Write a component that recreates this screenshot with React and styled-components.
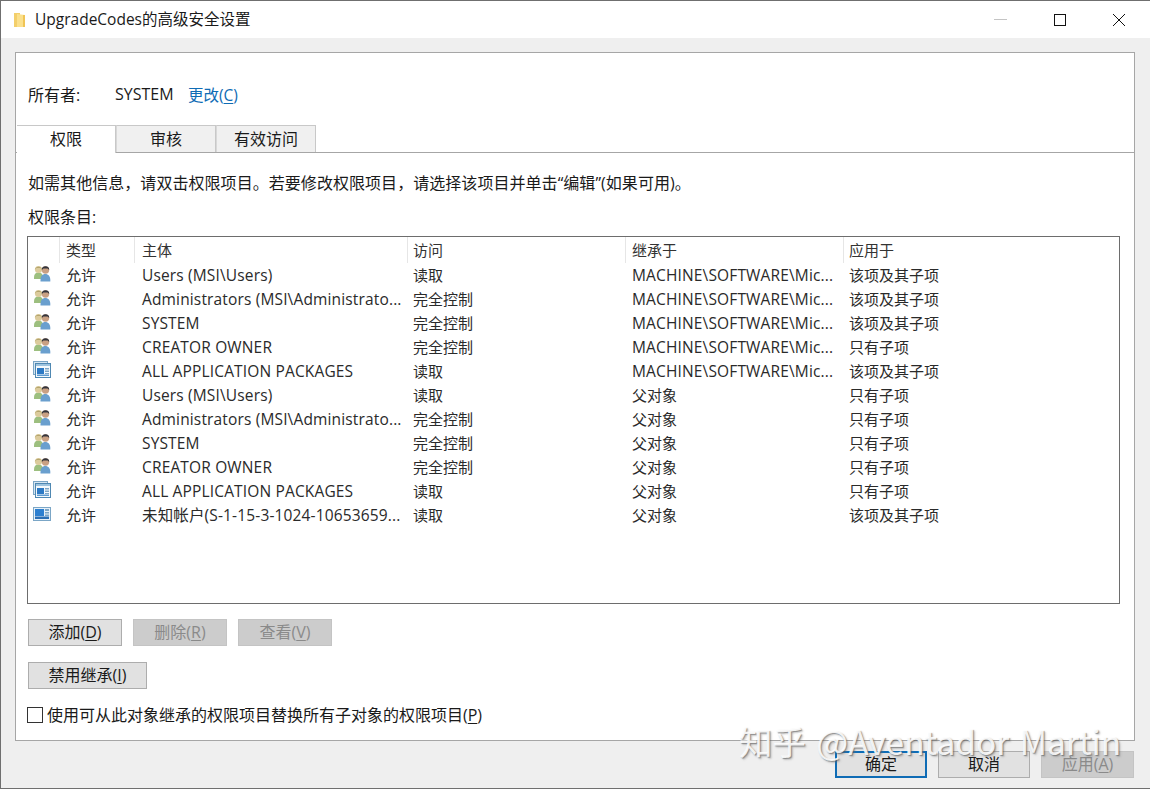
import React from 'react';
import styled, { createGlobalStyle } from 'styled-components';

const GlobalStyle = createGlobalStyle`
  html, body {
    margin: 0;
    padding: 0;
    background: #f0f0f0;
  }
  * {
    box-sizing: border-box;
  }
`;

const Window = styled.div`
  position: relative;
  width: 1150px;
  height: 789px;
  display: flex;
  flex-direction: column;
  overflow: hidden;
  background: #efefef;
  border: 1px solid #6f6f6f;
  border-right: none;
  font-family: "Open Sans", "Noto Sans CJK SC", sans-serif;
  font-size: 16px;
  color: #1a1a1a;
`;

const TitleBar = styled.div`
  height: 37px;
  flex: none;
  display: flex;
  align-items: center;
  padding-left: 12px;
  background: #fff;
`;

const TitleText = styled.span`
  margin-left: 8px;
  padding-bottom: 3px;
  font-size: 15.5px;
`;

const WindowControls = styled.div`
  margin-left: auto;
  display: flex;
  align-items: center;
  gap: 47px;
  padding-right: 25px;
`;

const Body = styled.div`
  flex: 1;
  display: flex;
  flex-direction: column;
  padding: 14px 15px 10px 14px;
`;

const Panel = styled.div`
  height: 689px;
  flex: none;
  display: flex;
  flex-direction: column;
  background: #fff;
  border: 1px solid #a6a6a6;
`;

const OwnerRow = styled.div`
  height: 72px;
  flex: none;
  display: flex;
  align-items: center;
  padding: 10px 0 0 12px;
`;

const OwnerLabel = styled.span`
  width: 87px;
`;

const OwnerValue = styled.span`
  width: 74px;
`;

const Link = styled.a`
  margin-left: -1px;
  font-size: 15.5px;
  color: #0f6cb5;
`;

const TabBar = styled.div`
  height: 28px;
  flex: none;
  display: flex;
  padding-left: 1px;
  border-bottom: 1px solid #a6a6a6;
`;

const Tab = styled.div`
  width: ${(p) => (p.$active ? '99px' : '100px')};
  height: ${(p) => (p.$active ? '28px' : '27px')};
  display: flex;
  align-items: center;
  justify-content: center;
  padding-bottom: 3px;
  background: ${(p) => (p.$active ? '#fff' : '#f0f0f0')};
  border: 1px solid #c8c8c8;
  border-left: ${(p) => (p.$active ? 'none' : '1px solid #d8d8d8')};
  border-bottom: none;
`;

const PanelBody = styled.div`
  flex: 1;
  display: flex;
  flex-direction: column;
  padding: 0 14px 0 11px;
`;

const Description = styled.div`
  height: 20px;
  margin-top: 20px;
  line-height: 20px;
  padding-left: 1px;
  letter-spacing: 0.05px;
  white-space: nowrap;
`;

const SectionLabel = styled.div`
  height: 20px;
  margin-top: 14px;
  line-height: 20px;
  padding-left: 1px;
`;

const EntryList = styled.div`
  height: 368px;
  flex: none;
  margin-top: 9px;
  background: #fff;
  border: 1px solid #6d6d6d;
  font-size: 15px;
`;

const columns = '31px 75px 273px 218px 218px 1fr';

const HeaderRow = styled.div`
  height: 26px;
  display: grid;
  grid-template-columns: ${columns};
`;

const HeaderCell = styled.div`
  display: flex;
  align-items: center;
  padding-left: ${(p) => p.$pad}px;
  padding-top: 1px;
  padding-bottom: 2px;
  box-shadow: ${(p) => (p.$pad ? 'inset 1px 0 0 #e6e6e6' : 'none')};
  color: #333;
  white-space: nowrap;
`;

const EntryRow = styled.div`
  height: 24px;
  display: grid;
  grid-template-columns: ${columns};
  align-items: center;
`;

const Cell = styled.div`
  padding-left: ${(p) => p.$pad}px;
  padding-bottom: ${(p) => (p.$latin ? '0' : '2px')};
  font-size: ${(p) => (p.$wide ? '15.5px' : '15px')};
  letter-spacing: ${(p) => (p.$wide ? '0.15px' : '0')};
  white-space: nowrap;
  overflow: hidden;
  color: #2a2a2a;
`;

const IconCell = styled.div`
  display: flex;
  align-items: center;
  padding: 0 0 3px 5px;
`;

const ButtonRow = styled.div`
  display: flex;
  gap: 11px;
  margin-top: ${(p) => p.$top}px;
  padding-left: 1px;
`;

const Button = styled.button`
  width: ${(p) => p.$width}px;
  height: 27px;
  padding: 0 0 2px;
  font-family: inherit;
  font-size: 16px;
  line-height: 1;
  color: ${(p) => (p.disabled ? '#8a8a8a' : '#1a1a1a')};
  background: ${(p) => (p.disabled ? '#cccccc' : '#e1e1e1')};
  border: ${(p) => (p.$primary ? '2px solid #0f6cb5' : p.disabled ? '1px solid #c4c4c4' : '1px solid #adadad')};
`;

const CheckRow = styled.label`
  display: flex;
  align-items: center;
  gap: 4px;
  height: 20px;
  margin-top: 16px;
  white-space: nowrap;
`;

const CheckText = styled.span`
  padding-bottom: 2px;
`;

const CheckBox = styled.span`
  width: 16px;
  height: 16px;
  flex: none;
  background: #fff;
  border: 1px solid #333;
`;

const Key = styled.span`
  text-decoration: underline;
  text-underline-offset: 2px;
  text-decoration-thickness: 1px;
`;

const Footer = styled.div`
  display: flex;
  justify-content: flex-end;
  gap: 11px;
  margin-top: 10px;
  padding-right: 1px;
`;

const Watermark = styled.div`
  position: absolute;
  left: 738px;
  top: 719px;
  font-family: "Noto Sans CJK SC", "Open Sans", sans-serif;
  font-size: 33.5px;
  line-height: 42px;
  word-spacing: 3px;
  white-space: nowrap;
  color: rgba(255, 255, 255, 0.88);
  text-shadow: 1px 1px 1px rgba(80, 80, 80, 0.55), 2px 2px 2px rgba(120, 120, 120, 0.35);
`;

const FolderIcon = () => (
  <svg width="14" height="16" viewBox="0 0 14 16">
    <path d="M1 1h6v14H1z" fill="#f3cf6b" />
    <path d="M4 2l8 1v12H4z" fill="#fbe08c" />
    <path d="M10 3h2v12h-2z" fill="#f0c455" />
  </svg>
);

const MinimizeIcon = () => (
  <svg width="13" height="12" viewBox="0 0 13 12">
    <path d="M0 5.5h13" stroke="#c4c4c4" strokeWidth="1" />
  </svg>
);

const MaximizeIcon = () => (
  <svg width="12" height="12" viewBox="0 0 12 12">
    <rect x="0.5" y="0.5" width="11" height="11" fill="none" stroke="#111" strokeWidth="1" />
  </svg>
);

const CloseIcon = () => (
  <svg width="12" height="12" viewBox="0 0 12 12">
    <path d="M0 0l12 12M12 0L0 12" stroke="#111" strokeWidth="1" />
  </svg>
);

const UsersIcon = () => (
  <svg width="19" height="17" viewBox="0 0 19 17">
    <path d="M1 12.5c0-3.2 1.6-5 4.5-5s4.5 1.8 4.5 5v1.5H1z" fill="#9dbf7f" />
    <circle cx="5.5" cy="4.5" r="3.6" fill="#dccb9c" />
    <path d="M2 4.5a3.6 3.6 0 0 1 7 0l-1.6-1.4H3.6z" fill="#b4a56f" />
    <path d="M7.5 15c0-3.8 1.8-6 4.8-6s5 2.2 5 6v1.5H7.5z" fill="#6a9fce" />
    <circle cx="12.5" cy="5" r="3.7" fill="#c9a083" />
    <path d="M8.8 5a3.7 3.7 0 0 1 7.4 0l-1.6-1.4h-4.2z" fill="#33343c" />
  </svg>
);

const PackagesIcon = () => (
  <svg width="18" height="17" viewBox="0 0 18 17">
    <rect x="0.5" y="0.5" width="14" height="13" fill="#d6e6f2" stroke="#7ba6c6" />
    <rect x="2.5" y="2.5" width="15" height="14" fill="#f4f9fc" stroke="#4f88b2" />
    <rect x="3" y="3" width="14" height="2" fill="#9cc3df" />
    <rect x="4" y="7" width="7" height="6" fill="#2c79c4" />
    <rect x="4" y="13.5" width="12" height="1.5" fill="#5c9ad0" />
    <path d="M12 7h4v1.5h-4zM12 9.5h4V11h-4zM12 12h4v1h-4z" fill="#7da6c6" />
  </svg>
);

const AppIcon = () => (
  <svg width="18" height="14" viewBox="0 0 18 14">
    <rect x="0.5" y="0.5" width="17" height="13" fill="#e6f0f8" stroke="#7ba6c6" />
    <rect x="2" y="2" width="9" height="7" fill="#2c7fd0" />
    <rect x="2" y="9.5" width="14" height="2.5" fill="#2a6fb5" />
    <path d="M12 2h4v2h-4zM12 5h4v1.5h-4zM12 7.5h4V9h-4z" fill="#7da6c6" />
  </svg>
);

const rowIcons = {
  users: UsersIcon,
  packages: PackagesIcon,
  app: AppIcon,
};

const MACHINE = 'MACHINE\\SOFTWARE\\Mic...';
const THIS_AND_SUB = '该项及其子项';
const SUB_ONLY = '只有子项';
const ADMINS = 'Administrators (MSI\\Administrato...';

const entries = [
  ['users', 'Users (MSI\\Users)', '读取', MACHINE, THIS_AND_SUB],
  ['users', ADMINS, '完全控制', MACHINE, THIS_AND_SUB],
  ['users', 'SYSTEM', '完全控制', MACHINE, THIS_AND_SUB],
  ['users', 'CREATOR OWNER', '完全控制', MACHINE, SUB_ONLY],
  ['packages', 'ALL APPLICATION PACKAGES', '读取', MACHINE, THIS_AND_SUB],
  ['users', 'Users (MSI\\Users)', '读取', '父对象', SUB_ONLY],
  ['users', ADMINS, '完全控制', '父对象', SUB_ONLY],
  ['users', 'SYSTEM', '完全控制', '父对象', SUB_ONLY],
  ['users', 'CREATOR OWNER', '完全控制', '父对象', SUB_ONLY],
  ['packages', 'ALL APPLICATION PACKAGES', '读取', '父对象', SUB_ONLY],
  ['app', '未知帐户(S-1-15-3-1024-10653659...', '读取', '父对象', THIS_AND_SUB],
];

const headers = [
  ['', 0],
  ['类型', 7],
  ['主体', 8],
  ['访问', 6],
  ['继承于', 7],
  ['应用于', 6],
];

const isLatin = (text) => /^[\x00-\x7f]+$/.test(text);

const App = () => (
  <>
    <GlobalStyle />
    <Window lang="zh-CN">
      <TitleBar>
        <FolderIcon />
        <TitleText>UpgradeCodes的高级安全设置</TitleText>
        <WindowControls>
          <MinimizeIcon />
          <MaximizeIcon />
          <CloseIcon />
        </WindowControls>
      </TitleBar>
      <Body>
        <Panel>
          <OwnerRow>
            <OwnerLabel>所有者:</OwnerLabel>
            <OwnerValue>SYSTEM</OwnerValue>
            <Link>更改(<Key>C</Key>)</Link>
          </OwnerRow>
          <TabBar>
            <Tab $active>权限</Tab>
            <Tab>审核</Tab>
            <Tab>有效访问</Tab>
          </TabBar>
          <PanelBody>
            <Description>如需其他信息，请双击权限项目。若要修改权限项目，请选择该项目并单击“编辑”(如果可用)。</Description>
            <SectionLabel>权限条目:</SectionLabel>
            <EntryList>
              <HeaderRow>
                {headers.map(([label, pad], i) => (
                  <HeaderCell key={i} $pad={pad}>{label}</HeaderCell>
                ))}
              </HeaderRow>
              {entries.map(([icon, principal, access, inherited, applies], i) => {
                const RowIcon = rowIcons[icon];
                return (
                  <EntryRow key={i}>
                    <IconCell><RowIcon /></IconCell>
                    <Cell $pad={7}>允许</Cell>
                    <Cell $pad={8} $wide $latin={isLatin(principal)}>{principal}</Cell>
                    <Cell $pad={6}>{access}</Cell>
                    <Cell $pad={7} $wide={isLatin(inherited)} $latin={isLatin(inherited)}>{inherited}</Cell>
                    <Cell $pad={6}>{applies}</Cell>
                  </EntryRow>
                );
              })}
            </EntryList>
            <ButtonRow $top={15}>
              <Button $width={94}>添加(<Key>D</Key>)</Button>
              <Button $width={94} disabled>删除(<Key>R</Key>)</Button>
              <Button $width={94} disabled>查看(<Key>V</Key>)</Button>
            </ButtonRow>
            <ButtonRow $top={16}>
              <Button $width={119}>禁用继承(<Key>I</Key>)</Button>
            </ButtonRow>
            <CheckRow>
              <CheckBox />
              <CheckText>使用可从此对象继承的权限项目替换所有子对象的权限项目(<Key>P</Key>)</CheckText>
            </CheckRow>
          </PanelBody>
        </Panel>
        <Footer>
          <Button $width={92} $primary>确定</Button>
          <Button $width={92}>取消</Button>
          <Button $width={93} disabled>应用(<Key>A</Key>)</Button>
        </Footer>
      </Body>
      <Watermark>知乎 @Aventador Martin</Watermark>
    </Window>
  </>
);

export default App;
